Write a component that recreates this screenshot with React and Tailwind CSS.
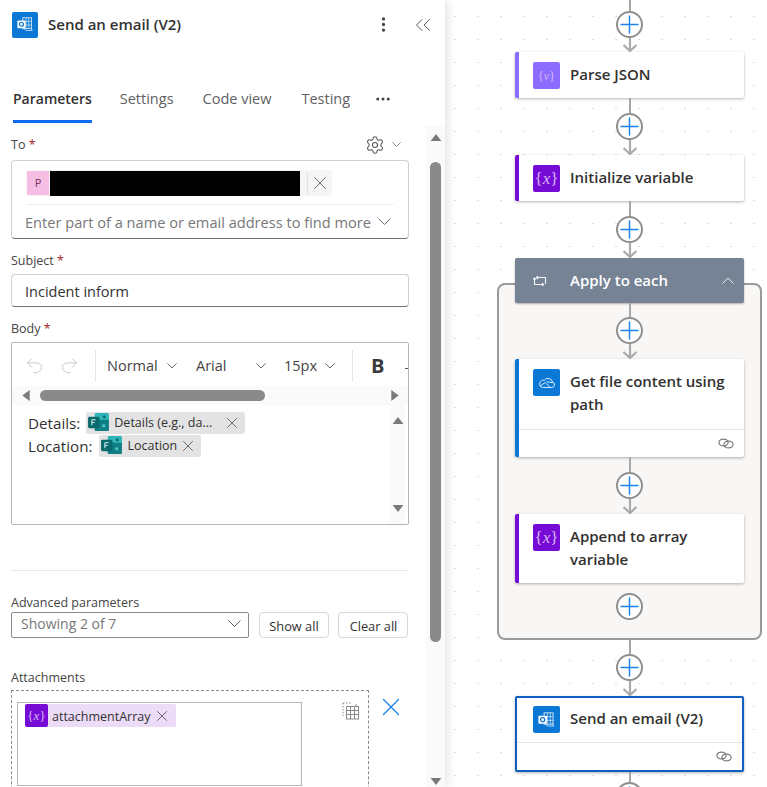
import { ChevronsLeft, MoreVertical, MoreHorizontal, Plus, Redo2, Settings, Undo2, X } from "lucide-react";

const Caret = ({ dir, className = "" }) => {
    const points = { up: "6,1 12,9 0,9", down: "0,1 12,1 6,9", left: "9,0 9,12 1,6", right: "1,0 1,12 9,6" };
    const box = dir === "up" || dir === "down" ? "0 0 12 10" : "0 0 10 12";
    return (
        <svg viewBox={box} className={className} fill="#7a7a7a">
            <polygon points={points[dir]} />
        </svg>
    );
};

const Chev = ({ w = 11, up, color = "#666", className = "" }) => (
    <svg viewBox="0 0 12 7" width={w} height={(w * 7) / 12} className={`shrink-0 ${className}`} fill="none" stroke={color} strokeWidth={12 / w}>
        <path d={up ? "M0.5 6.5L6 1l5.5 5.5" : "M0.5 0.5L6 6l5.5-5.5"} />
    </svg>
);

const OutlookIcon = ({ size = 27 }) => (
    <div className="flex shrink-0 items-center justify-center rounded-[2px] bg-[#0a78d4]" style={{ width: size, height: size }}>
        <svg viewBox="0 0 20 20" className="h-[70%] w-[70%]" fill="none">
            <rect x="7.5" y="3" width="9.5" height="12" stroke="#cfe6f8" strokeWidth="1" />
            <path d="M7.5 7h9.5M7.5 11h9.5M11 3v12M14 3v12" stroke="#cfe6f8" strokeWidth="0.8" />
            <path d="M8 14l3 3h7l-2-3" stroke="#cfe6f8" strokeWidth="0.9" />
            <rect x="1.5" y="6" width="9" height="8.5" rx="1" fill="#fff" />
            <circle cx="6" cy="10.2" r="2.2" stroke="#0a78d4" strokeWidth="1.3" />
        </svg>
    </div>
);

const FormsIcon = () => (
    <svg viewBox="0 0 22 20" className="h-[19px] w-[21px] shrink-0">
        <rect x="7" y="0" width="15" height="9" rx="1.5" fill="#2fb5b9" />
        <rect x="7" y="7" width="15" height="12" rx="1" fill="#0f7f83" />
        <rect x="0" y="4" width="12" height="12" rx="1.5" fill="#0b6a6e" />
        <circle cx="17" cy="4" r="1.6" fill="#0b6a6e" />
        <rect x="15" y="12" width="3" height="3" fill="#4fc7ca" />
        <path d="M4 7h4M4 7v6M4 10h3" stroke="#d5f2f2" strokeWidth="1.1" fill="none" />
    </svg>
);

const VarIcon = ({ label = "x", size = 27, bg = "bg-[#770bd6]", text = "text-[17px]" }) => (
    <div className={`flex shrink-0 items-center justify-center rounded-[2px] ${bg} ${text} font-['Liberation_Serif',serif] text-[#d9b8f5]`} style={{ width: size, height: size }}>
        <span>{"{"}<i>{label}</i>{"}"}</span>
    </div>
);

const LinkIcon = () => (
    <svg viewBox="0 0 16 11" className="h-[11px] w-[16px]" fill="none" stroke="#7d7d7d" strokeWidth="1.2">
        <ellipse cx="5.5" cy="4.5" rx="4.6" ry="3.4" />
        <ellipse cx="10.5" cy="6.5" rx="4.6" ry="3.4" />
    </svg>
);

const CloudIcon = () => (
    <svg viewBox="0 0 20 14" className="h-[13px] w-[18px]" fill="none" stroke="#d7ebfa" strokeWidth="1.1">
        <path d="M5 12.5h10.5a3 3 0 0 0 .6-5.9A5 5 0 0 0 7 4.6 4 4 0 0 0 5 12.5z" />
        <path d="M2 11l6-4 5 5M9.5 6.2l7 1" />
    </svg>
);

const LoopIcon = () => (
    <svg viewBox="0 0 14 14" className="h-[14px] w-[14px]" fill="none" stroke="#f2f4f6" strokeWidth="1.1">
        <path d="M1.5 4v6.5h9M12.5 10V3.5h-9" />
        <path d="M0 5.5L1.5 4 3 5.5M9 9l1.5 1.5L9 12M5 2L3.5 3.5 5 5" />
    </svg>
);

const AddButton = () => (
    <div className="flex h-[27px] w-[27px] shrink-0 items-center justify-center rounded-full border-2 border-[#8f8f8f] bg-white">
        <Plus size={29} strokeWidth={1.2} className="shrink-0 text-[#1f83ee]" />
    </div>
);

const Line = ({ h }) => <div className="w-[2px] shrink-0 bg-[#a8a8a8]" style={{ height: h }} />;

const Arrow = ({ h = 15 }) => (
    <svg viewBox={`0 0 16 ${h}`} className="shrink-0" width="16" height={h} fill="none" stroke="#ababab" strokeWidth="2.2">
        <path d={`M8 0V${h - 1}M1.5 ${h - 7}L8 ${h - 1}L14.5 ${h - 7}`} />
    </svg>
);

const Connector = ({ top = 15, bottom = 15 }) => (
    <div className="flex flex-col items-center">
        {top > 0 && <Line h={top} />}
        <AddButton />
        {bottom > 0 && <Arrow h={bottom} />}
    </div>
);

const Card = ({ color, icon, title, h, footer, selected }) => (
    <div className={`flex w-[229px] flex-col bg-white shadow-[0_1px_3px_rgba(0,0,0,0.3)] ${selected ? "rounded-[2px] border-2 border-[#0f5fc2]" : `rounded-[2px] border-l-4 ${color}`}`} style={{ height: h }}>
        <div className={`flex flex-1 items-start pr-2 ${selected ? "pl-[16px] pt-[8px]" : "pl-[14px] pt-[10px]"}`}>
            {icon}
            <div className="ml-[10px] mt-px text-[15px] leading-[23px] font-semibold text-[#323130]">{title}</div>
        </div>
        {footer && (
            <div className="flex h-[28px] shrink-0 items-center justify-end border-t border-[#e6e6e6] pr-[10px]">
                <LinkIcon />
            </div>
        )}
    </div>
);

const Tab = ({ label, active }) => (
    <div className={`border-b-[3px] pb-[9px] leading-[24px] ${active ? "border-[#0f6cf0] text-[14px] font-semibold text-[#323130]" : "border-transparent text-[14.5px] text-[#616161]"}`}>
        {label}
    </div>
);

const Label = ({ children, required, className = "" }) => (
    <div className={`h-[20px] text-[12.5px] leading-[20px] text-[#444] ${className}`}>
        {children}
        {required && <span className="text-[#a4262c]"> *</span>}
    </div>
);

const Token = ({ icon, label, className }) => (
    <div className={`flex h-[22px] shrink-0 items-center rounded-[2px] bg-[#e3e3e3] pl-[2px] pr-[4px] ${className}`}>
        {icon}
        <span className="ml-[5px] whitespace-nowrap text-[12.5px] text-[#323130]">{label}</span>
        <X size={18} strokeWidth={1} className="ml-auto text-[#444]" />
    </div>
);

const Parameters = () => (
    <div className="w-[420px] shrink-0 px-[11px] pt-[9px]">
        <div className="flex h-[20px] items-center justify-between">
            <Label required>To</Label>
            <div className="mr-[8px] flex items-center text-[#555]">
                <Settings size={20} strokeWidth={1.3} />
                <Chev w={9} color="#888" className="ml-[7px]" />
            </div>
        </div>
        <div className="mt-[5px] h-[79px] rounded-[4px] border border-[#d1d1d1] border-b-[#707070] px-[14px] pt-[9px]">
            <div className="flex h-[26px] w-[306px] items-center rounded-[4px] bg-[#f5f5f5] pl-[1px]">
                <div className="flex h-[24px] w-[22px] items-center justify-center bg-[#f4bfe3] text-[11px] text-[#7a2f6a]">P</div>
                <div className="ml-[1px] h-[25px] w-[250px] bg-black" />
                <div className="ml-[7px] flex flex-1 items-center justify-center border-l border-[#e0e0e0]">
                    <X size={22} strokeWidth={0.9} className="text-[#555]" />
                </div>
            </div>
            <div className="mt-[8px] flex h-[34px] items-center justify-between border-t border-[#eeeeee] pr-[3px]">
                <span className="-ml-px mt-[2px] whitespace-nowrap text-[14.6px] text-[#777]">Enter part of a name or email address to find more</span>
                <Chev w={13} />
            </div>
        </div>

        <Label required className="mt-[12px]">Subject</Label>
        <div className="mt-[3px] flex h-[33px] items-center rounded-[4px] border border-[#d1d1d1] border-b-[#707070] pl-[13px] pt-[2px] text-[14.5px] text-[#323130]">Incident inform</div>

        <Label required className="mt-[12px]">Body</Label>
        <div className="mt-[3px] flex h-[183px] flex-col overflow-hidden rounded-[2px] border border-[#b5b5b5]">
            <div className="flex h-[43px] shrink-0 items-center pl-[12px] pt-[2px] text-[14.5px] text-[#444]">
                <Undo2 size={21} strokeWidth={0.9} className="shrink-0 text-[#bdbdbd]" />
                <Redo2 size={21} strokeWidth={0.9} className="ml-[14px] shrink-0 text-[#bdbdbd]" />
                <div className="ml-[15px] h-[32px] w-px shrink-0 bg-[#e6e6e6]" />
                <span className="ml-[11px] w-[51px] shrink-0">Normal</span>
                <Chev w={10} className="ml-[9px]" />
                <span className="ml-[19px] w-[58px] shrink-0">Arial</span>
                <Chev w={10} className="ml-[2px]" />
                <span className="ml-[18px] w-[38px] shrink-0">15px</span>
                <Chev w={10} className="ml-[3px]" />
                <div className="ml-[17px] h-[32px] w-px shrink-0 bg-[#e6e6e6]" />
                <span className="ml-[18px] text-[20px] font-bold text-[#3a3a3a]">B</span>
                <div className="ml-auto mt-[6px] h-px w-[3px] shrink-0 bg-[#555]" />
            </div>
            <div className="flex h-[19px] shrink-0 items-center bg-[#fafafa] pl-[9px] pr-[8px]">
                <Caret dir="left" className="h-[11px] w-[10px]" />
                <div className="ml-[9px] h-[11px] w-[225px] rounded-full bg-[#8a8a8a]" />
                <Caret dir="right" className="ml-auto h-[11px] w-[10px]" />
            </div>
            <div className="flex min-h-0 flex-1">
                <div className="flex-1 pl-[16px] pt-[6px] text-[15.2px] leading-[23px] text-[#323130]">
                    <div className="flex h-[23px] items-center">
                        <span className="mt-[2px]">Details:</span>
                        <Token icon={<FormsIcon />} label="Details (e.g., da..." className="ml-[6px] w-[159px]" />
                    </div>
                    <div className="flex h-[23px] items-center">
                        <span className="mt-[2px]">Location:</span>
                        <Token icon={<FormsIcon />} label="Location" className="ml-[7px] w-[102px]" />
                    </div>
                </div>
                <div className="mr-[3px] flex w-[15px] shrink-0 flex-col items-center bg-[#fafafa] pb-[11px] pt-[11px]">
                    <Caret dir="up" className="h-[9px] w-[12px]" />
                    <Caret dir="down" className="mt-auto h-[9px] w-[12px]" />
                </div>
            </div>
        </div>

        <div className="mt-[45px] h-px bg-[#e8e8e8]" />

        <Label className="mt-[22px]">Advanced parameters</Label>
        <div className="-mt-px flex h-[26px] items-stretch">
            <div className="flex w-[238px] items-center justify-between rounded-[2px] border border-[#8a8a8a] pb-[3px] pl-[9px] pr-[7px] text-[14px] text-[#777]">
                <span>Showing 2 of 7</span>
                <Chev w={13} color="#555" />
            </div>
            <div className="ml-[10px] flex w-[70px] items-center justify-center rounded-[4px] border border-[#d6d6d6] pt-[4px] text-[12.8px] text-[#323130]">Show all</div>
            <div className="ml-[9px] flex w-[70px] items-center justify-center rounded-[4px] border border-[#d6d6d6] pl-[1px] pt-[4px] text-[12.8px] text-[#323130]">Clear all</div>
        </div>

        <Label className="mt-[30px]">Attachments</Label>
        <div className="mt-[2px] flex items-start">
            <div className="flex h-[130px] w-[358px] shrink-0 items-start border border-dashed border-[#8a8a8a] pl-[5px] pt-[10px]">
                <div className="mt-px h-[84px] w-[285px] shrink-0 border border-[#b5b5b5] pl-[7px] pt-[1px]">
                    <div className="flex h-[23px] w-[151px] items-center rounded-[2px] bg-[#ecdcf8]">
                        <VarIcon size={23} text="text-[13px]" />
                        <span className="ml-[4px] pt-[3px] text-[12.5px] text-[#323130]">attachmentArray</span>
                        <X size={18} strokeWidth={1} className="ml-auto mr-[5px] text-[#444]" />
                    </div>
                </div>
                <svg viewBox="0 0 18 18" className="ml-[40px] mt-[1px] h-[18px] w-[18px]" fill="none" stroke="#8a8a8a" strokeWidth="1">
                    <path d="M1 1h9M1 1v13" strokeDasharray="1.5 1.5" />
                    <rect x="4.5" y="4.5" width="12" height="12.5" />
                    <path d="M4.5 8.5h12M4.5 12.5h12M8.5 4.5v12.5M12.5 4.5v12.5M14 2v2.5" />
                </svg>
            </div>
            <X size={30} strokeWidth={1.1} className="ml-[7px] mt-[2px] shrink-0 text-[#1f83ee]" />
        </div>
    </div>
);

const Canvas = () => (
    <div className="min-w-0 flex-1 overflow-hidden bg-white bg-[radial-gradient(circle,#bdbdbd_0.8px,transparent_1px)] bg-size-[23px_23px] bg-position-[-1.5px_5px] pl-[70px]">
        <div className="flex w-[229px] flex-col items-center">
            <Connector top={11} bottom={14} />
            <Card color="border-[#8c6cff]" title="Parse JSON" h={46} icon={<VarIcon label="v" bg="bg-[#8c6cff]" text="text-[12px]" />} />
            <Connector />
            <Card color="border-[#770bd6]" title="Initialize variable" h={46} icon={<VarIcon />} />
            <Connector />
            <div className="ml-[-18px] mt-[25px] flex w-[265px] shrink-0 flex-col items-center self-start rounded-[8px] border-2 border-[#9a9a9a] bg-[#f8f7f5] pb-[18px]">
                <div className="mt-[-27px] flex h-[45px] w-[229px] shrink-0 items-center rounded-[2px] bg-[#768394] pl-[18px] pr-[9px] text-white shadow-[0_1px_2px_rgba(0,0,0,0.3)]">
                    <LoopIcon />
                    <span className="ml-[23px] text-[15px] font-semibold">Apply to each</span>
                    <Chev up w={12} color="#e8ebee" className="ml-auto mr-px" />
                </div>
                <Connector top={14} />
                <Card color="border-[#0a78d4]" title={<>Get file content using<br />path</>} h={98} footer icon={<div className="flex h-[27px] w-[27px] shrink-0 items-center justify-center rounded-[2px] bg-[#0a78d4]"><CloudIcon /></div>} />
                <Connector />
                <Card color="border-[#770bd6]" title={<>Append to array<br />variable</>} h={69} icon={<VarIcon />} />
                <div className="mt-[10px]"><AddButton /></div>
            </div>
            <Connector top={14} />
            <Card selected title="Send an email (V2)" h={76} footer icon={<OutlookIcon />} />
            <Connector top={10} bottom={0} />
        </div>
    </div>
);

export default function App() {
    return (
        <div className="flex h-[787px] w-[767px] overflow-hidden bg-white font-['Open_Sans',sans-serif]">
            <div className="relative z-10 flex h-full w-[445px] shrink-0 flex-col bg-white shadow-[2px_0_10px_rgba(0,0,0,0.12)]">
                <div className="flex h-[49px] shrink-0 items-center pl-[12px]">
                    <OutlookIcon size={26} />
                    <span className="ml-[10px] text-[15px] font-semibold text-[#323130]">Send an email (V2)</span>
                    <MoreVertical size={19} strokeWidth={2.2} className="ml-auto mr-[-1px] text-[#444]" />
                    <ChevronsLeft size={26} strokeWidth={0.9} className="ml-[18px] mr-[9px] text-[#555]" />
                </div>
                <div className="flex shrink-0 items-start pl-[13px] pt-[38px]">
                    <Tab label="Parameters" active />
                    <div className="ml-[28px]"><Tab label="Settings" /></div>
                    <div className="ml-[29px]"><Tab label="Code view" /></div>
                    <div className="ml-[30px]"><Tab label="Testing" /></div>
                    <MoreHorizontal size={18} className="ml-[24px] mt-[3px] text-[#444]" />
                </div>
                <div className="flex min-h-0 flex-1 overflow-hidden pt-[3px]">
                    <Parameters />
                    <div className="ml-[6px] flex w-[19px] shrink-0 flex-col items-center bg-[#fafafa] pb-[1px] pt-[7px]">
                        <Caret dir="up" className="h-[9px] w-[12px]" />
                        <div className="mt-[20px] h-[480px] w-[11px] rounded-full bg-[#8a8a8a]" />
                        <Caret dir="down" className="mt-auto h-[9px] w-[12px]" />
                    </div>
                </div>
            </div>
            <Canvas />
        </div>
    );
}
